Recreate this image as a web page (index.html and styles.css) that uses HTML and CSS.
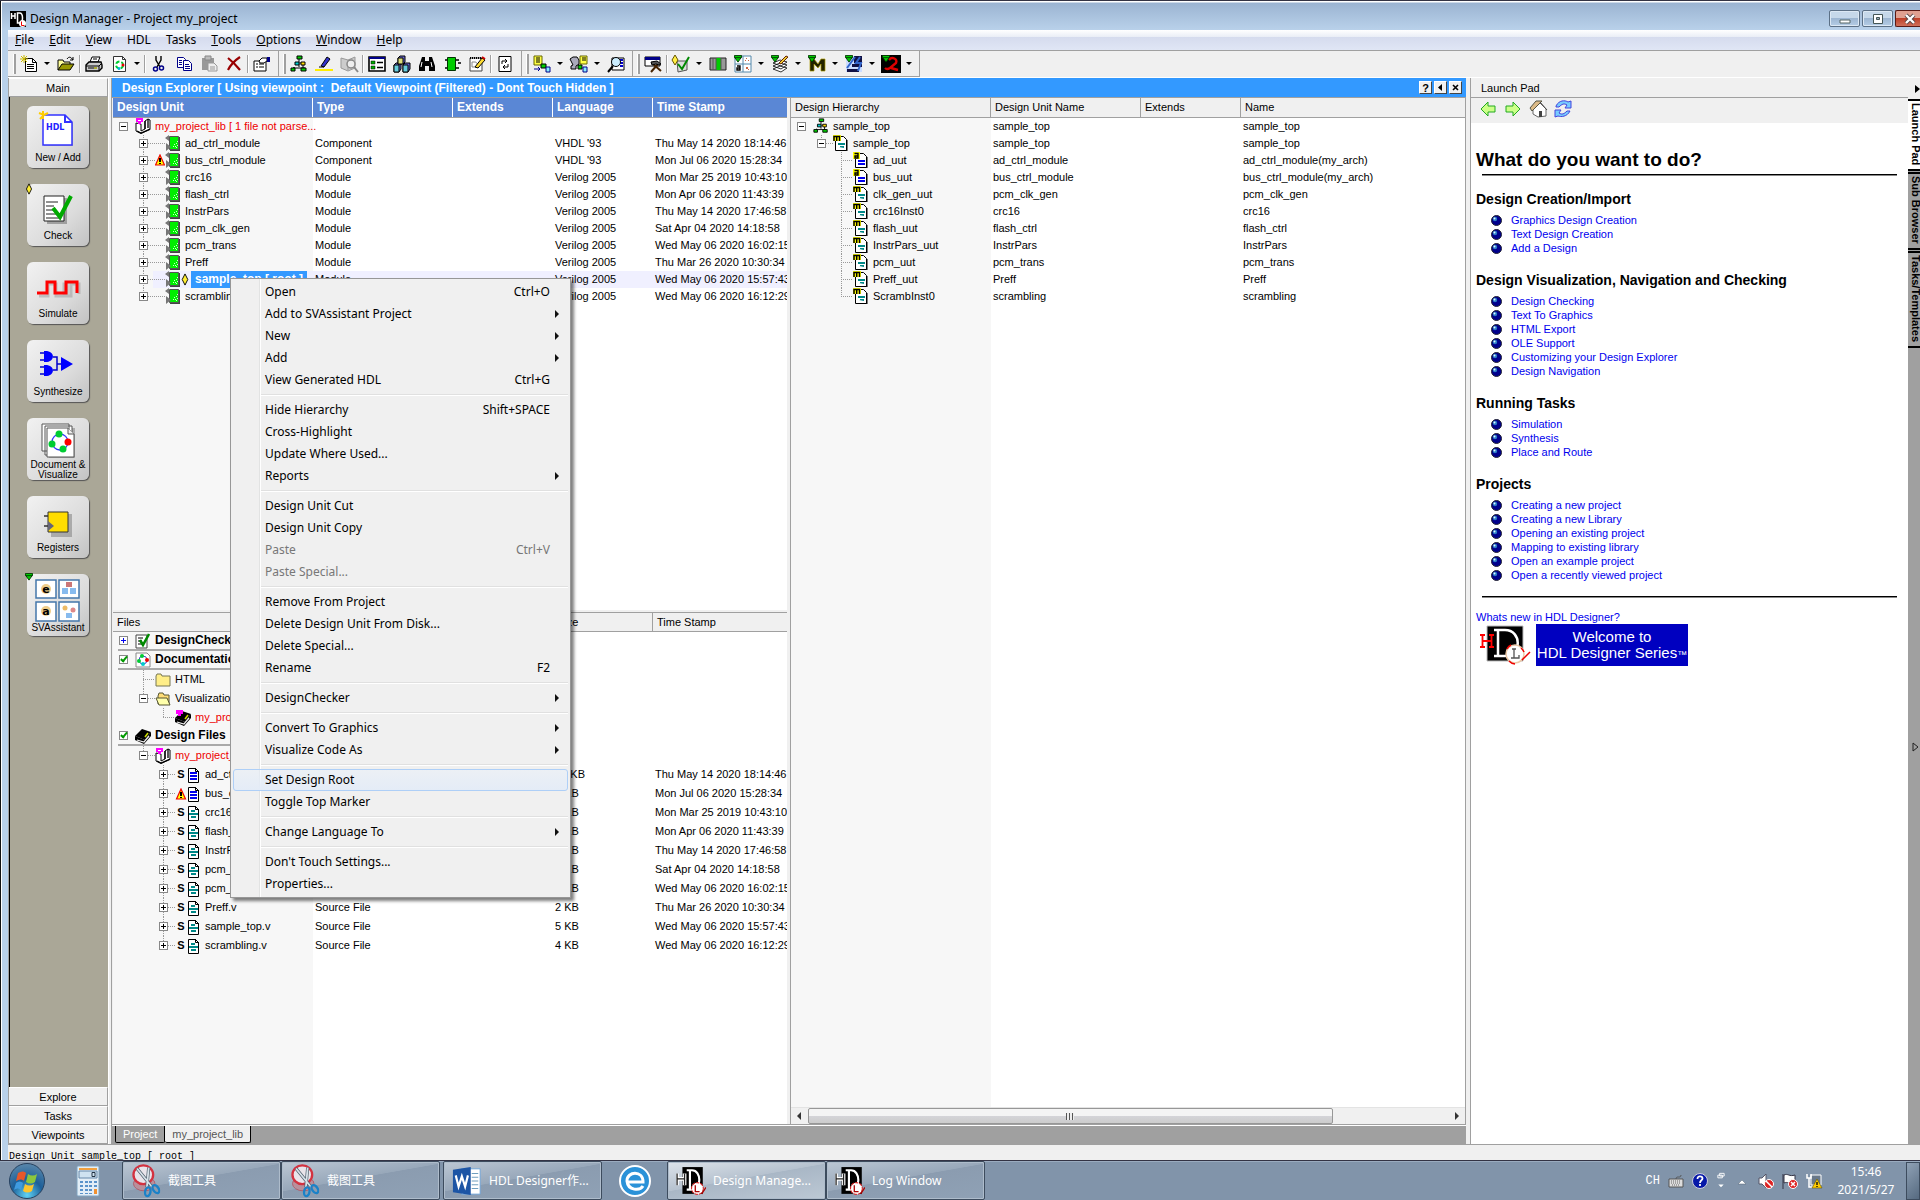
FILE: index.html
```html
<!DOCTYPE html>
<html lang="en">
<head>
<meta charset="utf-8">
<title>Design Manager - Project my_project</title>
<link rel="stylesheet" href="styles.css">
</head>
<body>
<svg class="sprite" aria-hidden="true">
  <symbol id="lib" viewBox="0 0 16 16"><path d="M1 5v8l5 2.500 9-4V2l-2-1-3 2v8l-4 2V6z" fill="#fff" stroke="#000"/><path d="M10 3v8M13 1v9M2 13l4 2 9-4" stroke="#000" stroke-width="1.300" fill="none"/><path d="M1 0h7v4H6v2H3V4H1z" fill="#f0f"/><path d="M3 2h3v1H3z" fill="#fff"/></symbol>
  <symbol id="unit" viewBox="0 0 16 16"><path d="M6 2h9v14H5z" fill="#444"/><path d="M4.500 1.500h9v13h-9z" fill="#0e0" stroke="#555"/><path d="M9 9h1v1H9zM11 8h1v1h-1zM8 11h1v1H8zM10 11h1v1h-1zM12 10h1v1h-1zM11 12h1v1h-1zM12 6h1v1h-1z" fill="#cfc"/><path d="M0 3l4-3v6zM1 8l5 4-5 4z" fill="#777"/></symbol>
  <symbol id="warn" viewBox="0 0 10 12"><path d="M5 1l4.500 10H.5z" fill="#ff0" stroke="#e00" stroke-width="1.200"/><path d="M4 4h2v4H4zM4 9h2v1H4z" fill="#000"/></symbol>
  <symbol id="gem" viewBox="0 0 8 14"><path d="M4 1l3 6-3 6-3-6z" fill="#fe3" stroke="#000"/></symbol>
  <symbol id="hier" viewBox="0 0 18 18"><path d="M9 4v3M9 9v3M5 8h8M4 12v3M13 10v5M3 13h12" stroke="#000" fill="none"/><path d="M7 1h5v3H7z" fill="#0c0" stroke="#000"/><path d="M5 7h4v3H5z" fill="#0cc" stroke="#000"/><path d="M11 7h4v3h-4z" fill="#fd0" stroke="#000"/><path d="M1 13h4v3H1z" fill="#0c0" stroke="#000"/><path d="M11 13h5v3h-5z" fill="#0c0" stroke="#000"/></symbol>
  <symbol id="mdoc" viewBox="0 0 16 16"><path d="M2.500 4v11.500h11V4.500l-3-3H5" fill="#fff" stroke="#000"/><path d="M14 5v11H3" fill="none" stroke="#000"/><path d="M5 8h7v2H5zM7 11h4v1H7zM6 13h5v-1" fill="#088"/><path d="M0 0h8v6H0z" fill="#ff0"/><path d="M1 6V1.500h5.500V6M3.700 2v4" stroke="#000" fill="none" stroke-width="1.500"/></symbol>
  <symbol id="adoc" viewBox="0 0 16 16"><path d="M2.500 4v11.500h11V4.500l-3-3H5" fill="#fff" stroke="#000"/><path d="M14 5v11H3" fill="none" stroke="#000"/><path d="M5 8h7v2H5zM5 11h7v2H5z" fill="#00e"/><path d="M0 0h7v7H0z" fill="#ff0"/><path d="M1.500 1.500H5V6H2V4h3" stroke="#000" fill="none" stroke-width="1.400"/></symbol>
  <symbol id="vhd" viewBox="0 0 14 16"><path d="M1.500 1.500h7l3 3v11h-10z" fill="#fff" stroke="#000"/><path d="M8.500 1v3.500H12" fill="none" stroke="#000"/><path d="M3 5h7v2H3zM3 8h7v2H3zM3 11h7v2H3z" fill="#00e"/></symbol>
  <symbol id="ver" viewBox="0 0 14 16"><path d="M1.500 1.500h7l3 3v11h-10z" fill="#fff" stroke="#000"/><path d="M8.500 1v3.500H12" fill="none" stroke="#000"/><path d="M4 5h4v2H4zM2 8h9v2H2zM4 11h5v2H4z" fill="#088"/></symbol>
  <symbol id="folder" viewBox="0 0 16 14"><path d="M1 3l1-2h4l1 2h8v10H1z" fill="#fe8" stroke="#775"/></symbol>
  <symbol id="folderopen" viewBox="0 0 16 14"><path d="M3 4l1-3h4l1 2h5v9H3z" fill="#fd7" stroke="#553"/><path d="M1 6h11l3 7H4z" fill="#ffa" stroke="#553"/></symbol>
  <symbol id="book" viewBox="0 0 16 16"><path d="M0 8l7-7 9 3-6 8z" fill="#000"/><path d="M0 8v4l9 4 7-8V4l-6 8z" fill="#000"/><path d="M2 12l7 2 5-6" stroke="#eee" fill="none" stroke-width="1.200"/><path d="M10 9l3-4" stroke="#cd0" stroke-width="1.500"/></symbol>
  <symbol id="chk" viewBox="0 0 16 16"><path d="M1 2h11v13H1z" fill="#fff" stroke="#444"/><path d="M3 5h5M3 8h4M3 11h5" stroke="#000"/><path d="M5 7l3 5L14 1" stroke="#080" stroke-width="2.600" fill="none"/></symbol>
  <symbol id="viz" viewBox="0 0 16 16"><path d="M1 1h11l3 3v11H1z" fill="#fff" stroke="#888"/><circle cx="8" cy="8" r="4" fill="none" stroke="#44c"/><circle cx="7" cy="4" r="2" fill="#0c3"/><circle cx="4" cy="9" r="2" fill="#0c3"/><circle cx="8" cy="12" r="2" fill="#0cc"/><circle cx="12" cy="8" r="2" fill="#e00"/></symbol>
  <symbol id="vizdoc" viewBox="0 0 18 18"><path d="M3.500 1.500h9l3 3v12h-12z" fill="#fff" stroke="#333"/><path d="M12.500 1.500v3h3" fill="none" stroke="#333"/><circle cx="9.500" cy="10" r="3.500" fill="none" stroke="#0c3" stroke-width="2" stroke-dasharray="4 2"/><circle cx="13" cy="10" r="1.500" fill="#e00"/><circle cx="9" cy="13.500" r="1.500" fill="#0bd"/></symbol>
  <symbol id="hdl" viewBox="0 0 28 28"><path d="M6 1h19v25H6z" fill="#000"/><path d="M10 4h5c9 0 9 18 0 18h-5M13 4v18" fill="none" stroke="#fff" stroke-width="2"/><path d="M1 7v11M8 7v11M1 12h7" stroke="#fff" stroke-width="3.400"/><path d="M1 7v11M8 7v11M1 12h7" stroke="#222" stroke-width="1.200"/><circle cx="20" cy="21" r="5.500" fill="#fff" stroke="#d22" stroke-dasharray="3 1"/><path d="M18 18v6h4M24 26l4-6" fill="none" stroke="#a00" stroke-width="1.200"/></symbol>
  <symbol id="snip" viewBox="0 0 32 38"><ellipse cx="14" cy="22" rx="12" ry="8" fill="#b8909c" stroke="#b05a68"/><ellipse cx="13" cy="12" rx="11" ry="10.500" fill="#e9e4ea" stroke="#d33240" stroke-width="2.600"/><path d="M6 5l17 21M19 4l-2 22" stroke="#50606e" stroke-width="3.500"/><path d="M6 5l17 21M19 4l-2 22" stroke="#d7e1e8" stroke-width="2"/><ellipse cx="18" cy="31" rx="3" ry="5" fill="none" stroke="#1b82c8" stroke-width="2.600" transform="rotate(10 18 31)"/><ellipse cx="27" cy="28" rx="3" ry="5" fill="none" stroke="#1b82c8" stroke-width="2.600" transform="rotate(-35 27 28)"/></symbol>
  <symbol id="ball" viewBox="0 0 11 11"><circle cx="5.500" cy="5.500" r="5" fill="#00008c" stroke="#223"/><circle cx="4" cy="4" r="2.200" fill="#2c7ec8"/><circle cx="3.500" cy="3.500" r="1" fill="#e5f6ff"/></symbol>
  <symbol id="pin" viewBox="0 0 9 9"><path d="M.5.500h8V3H8L4.500 8 1 3H.5z" fill="#0c0" stroke="#030"/><path d="M1 3h7" stroke="#030"/></symbol>
</svg>

<div class="window">
  <header class="titlebar">
    <svg class="app-icon" viewBox="0 0 16 16"><path d="M0 0h16v16H0z" fill="#000"/><path d="M1.500 2v6M5 2v6M1.500 5H5M7.500 2v10h2c4 0 4-10 0-10z" fill="none" stroke="#fff" stroke-width="1.500"/><circle cx="12.500" cy="12.500" r="3.500" fill="#fff"/><path d="M11.500 10.500v4h3" fill="none" stroke="#e00"/></svg>
    <span class="title-text">Design Manager - Project my_project</span>
    <div class="win-buttons">
      <button class="win-btn" aria-label="Minimize"><svg viewBox="0 0 12 12"><path d="M1 7h10v3H1z" fill="#fff" stroke="#566"/></svg></button>
      <button class="win-btn" aria-label="Maximize"><svg viewBox="0 0 12 12"><path d="M1.500 1.500h9v9h-9z" fill="#fff" stroke="#455"/><path d="M4.500 4.500h3v2h-3z" fill="#9ab" stroke="#455"/></svg></button>
      <button class="win-btn close" aria-label="Close"><svg viewBox="0 0 12 12"><path d="M2 2l8 8M10 2l-8 8" stroke="#544" stroke-width="4"/><path d="M2 2l8 8M10 2l-8 8" stroke="#fff" stroke-width="2.400"/></svg></button>
    </div>
  </header>
  <nav class="menubar">
    <button><u>F</u>ile</button><button><u>E</u>dit</button><button><u>V</u>iew</button><button>HDL</button><button>Tasks</button><button><u>T</u>ools</button><button><u>O</u>ptions</button><button><u>W</u>indow</button><button><u>H</u>elp</button>
  </nav>
  <div class="toolbar">
    <div class="tool-group">
      <button class="tool" aria-label="New"><svg viewBox="0 0 18 18"><path d="M5.500 3.500h7l4 4v9h-11z" fill="#fff" stroke="#000"/><path d="M12.500 3.500v4h4M7 9.500h7M7 11.500h7M7 13.500h7" fill="none" stroke="#000"/><path d="M4 0v8M0 4h8M1 1l6 6M7 1L1 7" stroke="#cb0"/></svg></button><button class="drop" aria-label="New options"></button>
      <button class="tool" aria-label="Open"><svg viewBox="0 0 18 18"><path d="M1 15V5h5l1 2h6v2" fill="#ff9" stroke="#000"/><path d="M1 15l4-6h12l-4 6z" fill="#990" stroke="#000"/><path d="M10 4c2-3 4-2 6 1m0-3v3h-3" fill="none" stroke="#000"/></svg></button>
      <span class="sep"></span>
      <button class="tool" aria-label="Print"><svg viewBox="0 0 18 18"><path d="M5 7l2-5h8l-2 5z" fill="#fff" stroke="#000"/><path d="M1 10l3-3h12l1 3v3l-3 3H1z" fill="#ccc" stroke="#000" stroke-width="1.400"/><path d="M1 11h13l3-3M14 11v5M8 4h4M3 13h9" stroke="#000" fill="none"/><path d="M9 13h3" stroke="#ee0"/></svg></button>
      <button class="tool" aria-label="Visualize"><svg viewBox="0 0 18 18"><use href="#vizdoc"/></svg></button><button class="drop" aria-label="Visualize options"></button>
      <span class="sep"></span>
      <button class="tool" aria-label="Cut"><svg viewBox="0 0 18 18"><path d="M6 1v4l4 7M11 1v4l-4 7" fill="none" stroke="#000" stroke-width="1.400"/><circle cx="5.500" cy="14" r="2" fill="none" stroke="#008" stroke-width="1.500"/><circle cx="11.500" cy="13" r="2" fill="none" stroke="#008" stroke-width="1.500"/></svg></button>
      <button class="tool" aria-label="Copy"><svg viewBox="0 0 18 18"><path d="M2.500 2.500h6l2 2v8h-8z" fill="#fff" stroke="#008"/><path d="M8.500 5.500h5l3 3v7h-8z" fill="#fff" stroke="#008"/><path d="M4 5.500h3M4 7.500h3M4 9.500h3M10 9.500h4M10 11.500h5M10 13.500h5" stroke="#008"/></svg></button>
      <button class="tool" aria-label="Paste"><svg viewBox="0 0 18 18"><path d="M2 3h12v12H2z" fill="#999"/><path d="M5 1h6v4H5z" fill="#bbb" stroke="#888"/><path d="M8 8h6l3 3v5H8z" fill="#eee" stroke="#999"/><path d="M10 12h5M10 14h5" stroke="#999"/></svg></button>
      <button class="tool" aria-label="Delete"><svg viewBox="0 0 18 18"><path d="M3 3c5 4 8 7 12 12M15 2C9 6 5 11 3 15" fill="none" stroke="#900" stroke-width="2.200"/></svg></button>
      <span class="sep"></span>
      <button class="tool" aria-label="Properties"><svg viewBox="0 0 18 18"><path d="M1 6h12v10H1z" fill="#fff" stroke="#000"/><path d="M3 9h2M6 9h5M3 12h2M6 12h5" stroke="#000"/><path d="M6 6l3-3h5v3l-3 2H7z" fill="#fff" stroke="#000"/><path d="M14 2h3v5h-3z" fill="#008"/></svg></button>
    </div>
    <div class="tool-group">
      <button class="tool" aria-label="Hierarchy"><svg viewBox="0 0 18 18"><use href="#hier"/></svg></button>
      <button class="tool" aria-label="Highlight"><svg viewBox="0 0 18 18"><path d="M6 11l6-9 3 2-6 8z" fill="#33c" stroke="#000"/><path d="M4 12h5" stroke="#000"/><path d="M0 14h18v2H0z" fill="#fe0"/></svg></button>
      <button class="tool" aria-label="Browse"><svg viewBox="0 0 18 18"><path d="M1 3l7 2 7-3v11l-7 3-7-3z" fill="#ccc" stroke="#999"/><path d="M8 5v10" stroke="#999"/><circle cx="11" cy="9" r="4" fill="#eee" stroke="#888" stroke-width="1.500"/><path d="M14 12l4 5" stroke="#888" stroke-width="2"/></svg></button>
      <span class="sep"></span>
      <button class="tool" aria-label="Viewpoint"><svg viewBox="0 0 18 18"><path d="M1 2h16v14H1z" fill="#fff" stroke="#000" stroke-width="1.600"/><path d="M1 2h16v2H1z" fill="#008"/><path d="M3 6h4v3H3zM3 11h4v3H3z" fill="#0a0" stroke="#000" stroke-width=".5"/><path d="M9 7.500h6M9 12.500h6" stroke="#000" stroke-width="1.500"/></svg></button>
      <button class="tool" aria-label="Components"><svg viewBox="0 0 18 18"><path d="M5 3l2-2h5v6l-2 2H5zM1 10l2-2h5v6l-2 3H1zM10 10l2-2h5v6l-2 3h-5z" fill="#66c" stroke="#000"/><path d="M5 3h5v6H5z" fill="#dd7" stroke="#000"/><path d="M1 10h5v7H1zM10 10h5v7h-5z" fill="#6cd" stroke="#000"/></svg></button>
      <button class="tool" aria-label="Find"><svg viewBox="0 0 18 18"><path d="M4 2h3v4h4V2h3l3 9v5h-6v-5H7v5H1v-5z" fill="#000"/><path d="M4 7l-1 5M13 7l1 5" stroke="#fff"/></svg></button>
      <button class="tool" aria-label="Block"><svg viewBox="0 0 18 18"><path d="M2 5h14M2 13h14M15 8h3" stroke="#000" stroke-width="1.500"/><path d="M4.500 2.500h8v13h-8z" fill="#0c0" stroke="#030"/></svg></button>
      <button class="tool" aria-label="Edit note"><svg viewBox="0 0 18 18"><path d="M2 3h12v13H2z" fill="#fff" stroke="#444"/><path d="M2 3h12" stroke="#000" stroke-dasharray="1 1" stroke-width="2"/><path d="M4 7h3c3 0 3 5 0 5H4z" fill="none" stroke="#888"/><path d="M7 12l7-9 3 2-7 8z" fill="#fd3" stroke="#000"/><path d="M14 2l3 2" stroke="#c00" stroke-width="2"/></svg></button>
      <span class="sep"></span>
      <button class="tool" aria-label="Refresh"><svg viewBox="0 0 18 18"><path d="M3 1.500h12v15H3z" fill="#fff" stroke="#000"/><path d="M6 9V6h5M9 4l2 2-2 2M12 9v3H7m2-2l-2 2 2 2" fill="none" stroke="#000"/></svg></button>
    </div>
    <div class="tool-group">
      <button class="tool" aria-label="Generate"><svg viewBox="0 0 18 18"><path d="M1 1h8v9H1z" fill="#ff4" stroke="#660"/><path d="M3 3h4M3 5h4M3 7h4" stroke="#000"/><path d="M8 9h5v4H8z" fill="#0c0" stroke="#000"/><path d="M13 12h4v5h-4z" fill="#8ef" stroke="#008"/><path d="M1 14h6m-2-2l2 2-2 2" fill="none" stroke="#008"/></svg></button><button class="drop" aria-label="Generate options"></button>
      <button class="tool" aria-label="Run through"><svg viewBox="0 0 18 18"><path d="M0 4l3-2h4l2 3v4l-3 2v3H1v-3l2-1z" fill="#aab" stroke="#000"/><path d="M10 1h7v8h-7z" fill="#ff4" stroke="#660"/><path d="M12 3h4M12 5h4" stroke="#000"/><path d="M8 10h4v4H8z" fill="#0c0" stroke="#000"/><path d="M13 12h4v5h-4z" fill="#8ef" stroke="#008"/></svg></button><button class="drop" aria-label="Run options"></button>
      <button class="tool" aria-label="Inspect"><svg viewBox="0 0 18 18"><path d="M5 3h12v12H5z" fill="#fff" stroke="#000"/><path d="M13 5h3M13 8h3M13 11h3" stroke="#00c" stroke-width="2"/><circle cx="9" cy="7" r="4.500" fill="#cef" stroke="#000"/><path d="M6 11l-5 6" stroke="#000" stroke-width="2"/></svg></button>
    </div>
    <div class="tool-group">
      <button class="tool" aria-label="Task settings"><svg viewBox="0 0 18 18"><path d="M1 2h15v9H1z" fill="#fff" stroke="#000"/><path d="M1 2h15v3H1z" fill="#008"/><path d="M9 9l8 7M14 9l-7 8" stroke="#420" stroke-width="2"/><path d="M7 7l6-1 4 3-2 1-3-1-4 1z" fill="#555" stroke="#000"/></svg></button>
      <span class="sep"></span>
      <button class="tool" aria-label="Check design"><svg viewBox="0 0 18 18"><path d="M5 6h10v9l-9 2z" fill="#ddd" stroke="#555"/><path d="M3 0l3 5-3 5-3-5z" fill="#fe4" stroke="#650"/><path d="M6 9l4 5 7-12" fill="none" stroke="#080" stroke-width="2"/></svg></button><button class="drop" aria-label="Check options"></button>
      <button class="tool" aria-label="Registers"><svg viewBox="0 0 18 18"><path d="M1 3h16v12H1z" fill="#999" stroke="#222"/><path d="M7 3h5v12H7z" fill="#0c0"/><path d="M4 3v12M7 3v12M12 3v12" stroke="#555"/></svg></button>
      <button class="tool" aria-label="SVAssistant"><svg viewBox="0 0 18 18"><path d="M1 1h16v16H1zM9 1v16M1 9h16" fill="#fff" stroke="#58a"/><path d="M3 11h3v4H3v-2h3" fill="none" stroke="#000" stroke-width="1.400"/><path d="M12 3h1v1h-1zM14 5h1v1h-1zM11 5h1v1h-1zM12 12h2v2h-2zM14 14h1v1h-1z" fill="#c64"/><use href="#pin" width="8" height="8"/></svg></button><button class="drop" aria-label="SVAssistant options"></button>
      <button class="tool" aria-label="Layers"><svg viewBox="0 0 18 18"><path d="M2 14l7-3 7 2-6 4zM2 11l7-3 7 2-6 4zM2 8l7-3 7 2-6 4z" fill="#fff" stroke="#000" stroke-width=".8"/><path d="M8 8l7-7 2 1-7 7z" fill="#ec3" stroke="#620"/><use href="#pin" width="8" height="8"/></svg></button><button class="drop" aria-label="Layer options"></button>
      <button class="tool" aria-label="ModelSim"><svg viewBox="0 0 18 18"><path d="M2 4h4l4 5 3-5h4v12h-4V9l-3 4-4-4v7H2z" fill="#220" stroke="#a90" stroke-width=".7"/><use href="#pin" width="8" height="8"/></svg></button><button class="drop" aria-label="ModelSim options"></button>
      <button class="tool" aria-label="Wave simulator"><svg viewBox="0 0 18 18"><path d="M1 1h16v16H1z" fill="#cdf"/><path d="M9 1h8v7H9zM7 9h10v3H7zM2 14h12v3H2z" fill="#114"/><path d="M2 13L10 2M15 2l-4 6h5l-3 8" stroke="#36c" stroke-width="2" fill="none"/><use href="#pin" width="8" height="8"/></svg></button><button class="drop" aria-label="Wave options"></button>
      <button class="tool" aria-label="Synthesis"><svg viewBox="0 0 18 18"><path d="M-1 0h20v18H-1z" fill="#000"/><path d="M7 5c3-4 9-1 7 3l-6 5c-3 2-5 0-5 0m6 0l7 2" fill="none" stroke="#d00" stroke-width="2.400"/><use href="#pin" width="8" height="8"/></svg></button><button class="drop" aria-label="Synthesis options"></button>
    </div>
  </div>

  <main class="workspace">
    <aside class="sidebar">
      <button class="side-tab">Main</button>
      <div class="launchers">
        <button class="launcher"><svg viewBox="0 0 62 42"><path d="M17 10h22l7 7v23H17z" fill="#888" opacity=".5"/><path d="M16 9h22l7 7v23H16z" fill="#fff" stroke="#33f" stroke-width="1.500"/><path d="M38 9v7h7" fill="none" stroke="#33f" stroke-width="2"/><path d="M12 7l5 2 4-2M17 9l-4 4M16 5v8" stroke="#fc0" stroke-width="2" fill="none"/><text x="19" y="24" class="hdl-text">HDL</text></svg><span>New / Add</span></button>
        <button class="launcher"><svg viewBox="0 0 62 42"><path d="M20 14h20v26H20z" fill="#777" opacity=".6"/><path d="M17 12h20v25H17z" fill="#fff" stroke="#222"/><path d="M19 18h12M19 22h8M19 26h9M19 30h12M19 34h13" stroke="#222"/><path d="M26 24l7 9 11-21" fill="none" stroke="#0a0" stroke-width="4"/></svg><span>Check</span><svg class="badge" viewBox="0 0 8 14"><use href="#gem"/></svg></button>
        <button class="launcher"><svg viewBox="0 0 62 42"><path d="M12 34h9V22h8v12h8V22h3v12h4V22h8v10" fill="none" stroke="#888" stroke-width="3" opacity=".4"/><path d="M10 32h10V20h8v12h10V20h4M38 20v12M41 32h-4M38 20h4v12M42 20h8v11" fill="none" stroke="#f00" stroke-width="3" opacity="0"/><path d="M10 31h10V20h8v11h11V20h11v11" fill="none" stroke="#f00" stroke-width="3"/></svg><span>Simulate</span></button>
        <button class="launcher"><svg viewBox="0 0 62 42"><path d="M17 11c12-1 12 12 0 11zM17 25c12-1 12 12 0 11zM34 17l12 7-12 7z" fill="#00f"/><path d="M13 13h4M13 20h4M13 27h4M13 34h4M26 17h4v13h-4M30 24h4" stroke="#00c" stroke-width="1.500" fill="none"/></svg><span>Synthesize</span></button>
        <button class="launcher"><svg viewBox="0 0 62 42"><path d="M18 10h30v30H22z" fill="#777" opacity=".5"/><path d="M15 6h27v27H15zM18 8h27v29H18z" fill="#fff" stroke="#555"/><path d="M20 10h21l6 6v23H20z" fill="#fff" stroke="#555"/><path d="M41 10v6h6" fill="#eee" stroke="#555"/><circle cx="33" cy="24" r="8" fill="none" stroke="#33f" stroke-width="1.300"/><circle cx="32" cy="16" r="3.500" fill="#0c3"/><circle cx="25" cy="26" r="3.500" fill="#0c3"/><circle cx="36" cy="31" r="3.500" fill="#0c3"/><circle cx="41" cy="24" r="3.500" fill="#f00"/></svg><span>Document &amp; Visualize</span></button>
        <button class="launcher"><svg viewBox="0 0 62 42"><path d="M24 18h21v23H24z" fill="#777" opacity=".5"/><path d="M21 16h20v20H21z" fill="#fd0" stroke="#333"/><path d="M17 20h4M17 30h4" stroke="#333" stroke-width="1.500"/><path d="M21 25l6 5-6 5z" fill="#667"/></svg><span>Registers</span></button>
        <button class="launcher tall"><svg viewBox="0 0 62 46"><path d="M9 6h20v18H9zM32 6h20v18H32zM9 28h20v19H9zM32 28h20v19H32z" fill="#fff" stroke="#47a" stroke-width="1.500"/><circle cx="19" cy="15" r="5" fill="#ec8"/><circle cx="19" cy="37" r="5" fill="#ec8"/><path d="M39 8h6v5h-6z" fill="#c77"/><path d="M35 14h6v6h-6zM43 14h6v6h-6zM39 39h6v5h-6z" fill="#8be"/><circle cx="38" cy="34" r="2.500" fill="#eb6"/><circle cx="46" cy="36" r="2.500" fill="#d88"/><text x="19" y="19" class="sv-text">e</text><text x="19" y="41" class="sv-text">a</text></svg><span>SVAssistant</span><svg class="badge" viewBox="0 0 9 9"><use href="#pin"/></svg></button>
      </div>
      <button class="side-tab">Explore</button><button class="side-tab">Tasks</button><button class="side-tab">Viewpoints</button>
    </aside>

    <section class="explorer">
      <div class="panel-title"><h2>Design Explorer [ Using viewpoint :&nbsp; Default Viewpoint (Filtered) - Dont Touch Hidden ]</h2>
        <button class="mini">?</button><button class="mini" aria-label="Dock"><svg viewBox="0 0 9 9"><path d="M6 1v7L2 4.500z"/></svg></button><button class="mini" aria-label="Close panel"><svg viewBox="0 0 9 9"><path d="M2 2l5 5M7 2L2 7" stroke="#000" stroke-width="1.600"/></svg></button>
      </div>
      <div class="panes">
        <div class="pane-left">
          <div class="pane shade">
            <table class="grid active">
              <colgroup><col class="w200"><col class="w140"><col class="w100"><col class="w100"><col></colgroup>
              <thead><tr><th>Design Unit</th><th>Type</th><th>Extends</th><th>Language</th><th>Time Stamp</th></tr></thead>
              <tbody>
                <tr><td><div class="tree l0"><button class="toggle" aria-label="Collapse"></button><svg class="icon"><use href="#lib"/></svg><span class="red">my_project_lib [ 1 file not parse...</span></div></td><td></td><td></td><td></td><td></td></tr>
                <tr><td><div class="tree l1 g30"><button class="toggle plus" aria-label="Expand"></button><i class="dots d17"></i><svg class="icon"><use href="#unit"/></svg><span>ad_ctrl_module</span></div></td><td>Component</td><td></td><td>VHDL '93</td><td>Thu May 14 2020 18:14:46</td></tr>
                <tr><td><div class="tree l1 g30"><button class="toggle plus" aria-label="Expand"></button><i class="dots d7"></i><svg class="warn"><use href="#warn"/></svg><svg class="icon"><use href="#unit"/></svg><span>bus_ctrl_module</span></div></td><td>Component</td><td></td><td>VHDL '93</td><td>Mon Jul 06 2020 15:28:34</td></tr>
                <tr><td><div class="tree l1 g30"><button class="toggle plus" aria-label="Expand"></button><i class="dots d17"></i><svg class="icon"><use href="#unit"/></svg><span>crc16</span></div></td><td>Module</td><td></td><td>Verilog 2005</td><td>Mon Mar 25 2019 10:43:10</td></tr>
                <tr><td><div class="tree l1 g30"><button class="toggle plus" aria-label="Expand"></button><i class="dots d17"></i><svg class="icon"><use href="#unit"/></svg><span>flash_ctrl</span></div></td><td>Module</td><td></td><td>Verilog 2005</td><td>Mon Apr 06 2020 11:43:39</td></tr>
                <tr><td><div class="tree l1 g30"><button class="toggle plus" aria-label="Expand"></button><i class="dots d17"></i><svg class="icon"><use href="#unit"/></svg><span>InstrPars</span></div></td><td>Module</td><td></td><td>Verilog 2005</td><td>Thu May 14 2020 17:46:58</td></tr>
                <tr><td><div class="tree l1 g30"><button class="toggle plus" aria-label="Expand"></button><i class="dots d17"></i><svg class="icon"><use href="#unit"/></svg><span>pcm_clk_gen</span></div></td><td>Module</td><td></td><td>Verilog 2005</td><td>Sat Apr 04 2020 14:18:58</td></tr>
                <tr><td><div class="tree l1 g30"><button class="toggle plus" aria-label="Expand"></button><i class="dots d17"></i><svg class="icon"><use href="#unit"/></svg><span>pcm_trans</span></div></td><td>Module</td><td></td><td>Verilog 2005</td><td>Wed May 06 2020 16:02:15</td></tr>
                <tr><td><div class="tree l1 g30"><button class="toggle plus" aria-label="Expand"></button><i class="dots d17"></i><svg class="icon"><use href="#unit"/></svg><span>Preff</span></div></td><td>Module</td><td></td><td>Verilog 2005</td><td>Thu Mar 26 2020 10:30:34</td></tr>
                <tr class="current"><td><div class="tree l1 g30"><button class="toggle plus" aria-label="Expand"></button><i class="dots d17"></i><svg class="icon"><use href="#unit"/></svg><svg class="gem"><use href="#gem"/></svg><span class="picked">sample_top [ root ]</span></div></td><td>Module</td><td></td><td>Verilog 2005</td><td>Wed May 06 2020 15:57:43</td></tr>
                <tr><td><div class="tree l1 g30 last"><button class="toggle plus" aria-label="Expand"></button><i class="dots d17"></i><svg class="icon"><use href="#unit"/></svg><span>scrambling</span></div></td><td>Module</td><td></td><td>Verilog 2005</td><td>Wed May 06 2020 16:12:29</td></tr>
              </tbody>
            </table>
          </div>
          <div class="pane shade files">
            <table class="grid">
              <colgroup><col class="w200"><col class="w140"><col class="w100"><col class="w100"><col></colgroup>
              <thead><tr><th>Files</th><th>Type</th><th></th><th>Size</th><th>Time Stamp</th></tr></thead>
              <tbody>
                <tr><td><div class="tree section"><button class="toggle plus blue" aria-label="Expand"></button><svg class="icon"><use href="#chk"/></svg><span>DesignChecker</span></div></td><td></td><td></td><td></td><td></td></tr>
                <tr><td><div class="tree section"><input type="checkbox" class="tick" checked aria-label="Documentation and Visualization"><svg class="icon"><use href="#viz"/></svg><span>Documentation</span></div></td><td></td><td></td><td></td><td></td></tr>
                <tr><td><div class="tree leaf30 g30"><i class="dots d12"></i><svg class="icon"><use href="#folder"/></svg><span>HTML</span></div></td><td></td><td></td><td></td><td></td></tr>
                <tr><td><div class="tree l1 g30 last"><button class="toggle" aria-label="Collapse"></button><i class="dots d7"></i><svg class="icon"><use href="#folderopen"/></svg><span>Visualization</span></div></td><td></td><td></td><td></td><td></td></tr>
                <tr><td><div class="tree leaf50 g50 last"><i class="dots d12"></i><svg class="icon"><use href="#book"/><path d="M1 0h7v4H6v2H3V4H1z" fill="#f0f"/></svg><span class="red">my_project_lib</span></div></td><td></td><td></td><td></td><td></td></tr>
                <tr><td><div class="tree section"><input type="checkbox" class="tick" checked aria-label="Design Files"><svg class="icon"><use href="#book"/></svg><span>Design Files</span></div></td><td></td><td></td><td></td><td></td></tr>
                <tr><td><div class="tree l1 g30 last"><button class="toggle" aria-label="Collapse"></button><i class="dots d7"></i><svg class="icon"><use href="#lib"/></svg><span class="red">my_project_lib</span></div></td><td></td><td></td><td></td><td></td></tr>
                <tr><td><div class="tree l2 g50"><button class="toggle plus" aria-label="Expand"></button><i class="dots d7"></i><b class="s">S</b><svg class="icon narrow"><use href="#vhd"/></svg><span>ad_ctrl_module.vhd</span></div></td><td>Source File</td><td></td><td>12 KB</td><td>Thu May 14 2020 18:14:46</td></tr>
                <tr><td><div class="tree l2 g50"><button class="toggle plus" aria-label="Expand"></button><i class="dots d7"></i><svg class="warn wide"><use href="#warn"/></svg><svg class="icon narrow"><use href="#vhd"/></svg><span>bus_ctrl_module.vhd</span></div></td><td>Source File</td><td></td><td>4 KB</td><td>Mon Jul 06 2020 15:28:34</td></tr>
                <tr><td><div class="tree l2 g50"><button class="toggle plus" aria-label="Expand"></button><i class="dots d7"></i><b class="s">S</b><svg class="icon narrow"><use href="#ver"/></svg><span>crc16.v</span></div></td><td>Source File</td><td></td><td>2 KB</td><td>Mon Mar 25 2019 10:43:10</td></tr>
                <tr><td><div class="tree l2 g50"><button class="toggle plus" aria-label="Expand"></button><i class="dots d7"></i><b class="s">S</b><svg class="icon narrow"><use href="#ver"/></svg><span>flash_ctrl.v</span></div></td><td>Source File</td><td></td><td>4 KB</td><td>Mon Apr 06 2020 11:43:39</td></tr>
                <tr><td><div class="tree l2 g50"><button class="toggle plus" aria-label="Expand"></button><i class="dots d7"></i><b class="s">S</b><svg class="icon narrow"><use href="#ver"/></svg><span>InstrPars.v</span></div></td><td>Source File</td><td></td><td>4 KB</td><td>Thu May 14 2020 17:46:58</td></tr>
                <tr><td><div class="tree l2 g50"><button class="toggle plus" aria-label="Expand"></button><i class="dots d7"></i><b class="s">S</b><svg class="icon narrow"><use href="#ver"/></svg><span>pcm_clk_gen.v</span></div></td><td>Source File</td><td></td><td>2 KB</td><td>Sat Apr 04 2020 14:18:58</td></tr>
                <tr><td><div class="tree l2 g50"><button class="toggle plus" aria-label="Expand"></button><i class="dots d7"></i><b class="s">S</b><svg class="icon narrow"><use href="#ver"/></svg><span>pcm_trans.v</span></div></td><td>Source File</td><td></td><td>4 KB</td><td>Wed May 06 2020 16:02:15</td></tr>
                <tr><td><div class="tree l2 g50"><button class="toggle plus" aria-label="Expand"></button><i class="dots d7"></i><b class="s">S</b><svg class="icon narrow"><use href="#ver"/></svg><span>Preff.v</span></div></td><td>Source File</td><td></td><td>2 KB</td><td>Thu Mar 26 2020 10:30:34</td></tr>
                <tr><td><div class="tree l2 g50"><button class="toggle plus" aria-label="Expand"></button><i class="dots d7"></i><b class="s">S</b><svg class="icon narrow"><use href="#ver"/></svg><span>sample_top.v</span></div></td><td>Source File</td><td></td><td>5 KB</td><td>Wed May 06 2020 15:57:43</td></tr>
                <tr><td><div class="tree l2 g50 last"><button class="toggle plus" aria-label="Expand"></button><i class="dots d7"></i><b class="s">S</b><svg class="icon narrow"><use href="#ver"/></svg><span>scrambling.v</span></div></td><td>Source File</td><td></td><td>4 KB</td><td>Wed May 06 2020 16:12:29</td></tr>
              </tbody>
            </table>
          </div>
        </div>
        <div class="pane-right">
          <div class="pane shade">
            <table class="grid">
              <colgroup><col class="w200"><col class="w150"><col class="w100"><col></colgroup>
              <thead><tr><th>Design Hierarchy</th><th>Design Unit Name</th><th>Extends</th><th>Name</th></tr></thead>
              <tbody>
                <tr><td><div class="tree l0"><button class="toggle" aria-label="Collapse"></button><svg class="icon"><use href="#hier"/></svg><span>sample_top</span></div></td><td>sample_top</td><td></td><td>sample_top</td></tr>
                <tr><td><div class="tree l1 g30 last"><button class="toggle" aria-label="Collapse"></button><i class="dots d7"></i><svg class="icon"><use href="#mdoc"/></svg><span>sample_top</span></div></td><td>sample_top</td><td></td><td>sample_top</td></tr>
                <tr><td><div class="tree leaf50 g50"><i class="dots d12"></i><svg class="icon"><use href="#adoc"/></svg><span>ad_uut</span></div></td><td>ad_ctrl_module</td><td></td><td>ad_ctrl_module(my_arch)</td></tr>
                <tr><td><div class="tree leaf50 g50"><i class="dots d12"></i><svg class="icon"><use href="#adoc"/></svg><span>bus_uut</span></div></td><td>bus_ctrl_module</td><td></td><td>bus_ctrl_module(my_arch)</td></tr>
                <tr><td><div class="tree leaf50 g50"><i class="dots d12"></i><svg class="icon"><use href="#mdoc"/></svg><span>clk_gen_uut</span></div></td><td>pcm_clk_gen</td><td></td><td>pcm_clk_gen</td></tr>
                <tr><td><div class="tree leaf50 g50"><i class="dots d12"></i><svg class="icon"><use href="#mdoc"/></svg><span>crc16Inst0</span></div></td><td>crc16</td><td></td><td>crc16</td></tr>
                <tr><td><div class="tree leaf50 g50"><i class="dots d12"></i><svg class="icon"><use href="#mdoc"/></svg><span>flash_uut</span></div></td><td>flash_ctrl</td><td></td><td>flash_ctrl</td></tr>
                <tr><td><div class="tree leaf50 g50"><i class="dots d12"></i><svg class="icon"><use href="#mdoc"/></svg><span>InstrPars_uut</span></div></td><td>InstrPars</td><td></td><td>InstrPars</td></tr>
                <tr><td><div class="tree leaf50 g50"><i class="dots d12"></i><svg class="icon"><use href="#mdoc"/></svg><span>pcm_uut</span></div></td><td>pcm_trans</td><td></td><td>pcm_trans</td></tr>
                <tr><td><div class="tree leaf50 g50"><i class="dots d12"></i><svg class="icon"><use href="#mdoc"/></svg><span>Preff_uut</span></div></td><td>Preff</td><td></td><td>Preff</td></tr>
                <tr><td><div class="tree leaf50 g50 last"><i class="dots d12"></i><svg class="icon"><use href="#mdoc"/></svg><span>ScrambInst0</span></div></td><td>scrambling</td><td></td><td>scrambling</td></tr>
              </tbody>
            </table>
          </div>
          <div class="hscroll">
            <button aria-label="Scroll left"><svg viewBox="0 0 7 8"><path d="M5 0v8L1 4z"/></svg></button>
            <div class="track"><div class="thumb"></div></div>
            <button aria-label="Scroll right"><svg viewBox="0 0 7 8"><path d="M2 0v8l4-4z"/></svg></button>
          </div>
        </div>
      </div>
      <div class="doc-tabs"><button class="doc-tab">Project</button><button class="doc-tab on">my_project_lib</button></div>
    </section>

    <section class="launchpad">
      <div class="pad-main">
        <div class="pad-title">Launch Pad</div>
        <div class="pad-tools">
          <button aria-label="Back"><svg viewBox="0 0 18 18"><path d="M2 9l7-7v4h7v6H9v4z" fill="#cf8" stroke="#2a2"/></svg></button>
          <button aria-label="Forward"><svg viewBox="0 0 18 18"><path d="M16 9L9 2v4H2v6h7v4z" fill="#cf8" stroke="#2a2"/></svg></button>
          <button aria-label="Home"><svg viewBox="0 0 18 18"><path d="M4 8l7-5 6 6v7l-8 1-5-3z" fill="#fff" stroke="#666"/><path d="M1 8l6-7h6l-7 7-3 3z" fill="#db8" stroke="#554"/><path d="M11 2l7 8" stroke="#444"/><path d="M10 11h3v6h-3z" fill="#444"/></svg></button>
          <button aria-label="Reload"><svg viewBox="0 0 18 18"><path d="M2 6c3-6 9-6 12-4l3-1v7h-6l2-3c-3-2-5-1-8 2H2zM16 11c-3 6-9 6-12 5l-3 1v-7h6l-2 3c3 2 5 1 8-2z" fill="#7cf" stroke="#44d"/></svg></button>
        </div>
        <div class="pad-body">
          <h1>What do you want to do?</h1>
          <hr>
          <h3>Design Creation/Import</h3>
          <ul><li><svg><use href="#ball"/></svg><a href="#">Graphics Design Creation</a></li><li><svg><use href="#ball"/></svg><a href="#">Text Design Creation</a></li><li><svg><use href="#ball"/></svg><a href="#">Add a Design</a></li></ul>
          <h3>Design Visualization, Navigation and Checking</h3>
          <ul><li><svg><use href="#ball"/></svg><a href="#">Design Checking</a></li><li><svg><use href="#ball"/></svg><a href="#">Text To Graphics</a></li><li><svg><use href="#ball"/></svg><a href="#">HTML Export</a></li><li><svg><use href="#ball"/></svg><a href="#">OLE Support</a></li><li><svg><use href="#ball"/></svg><a href="#">Customizing your Design Explorer</a></li><li><svg><use href="#ball"/></svg><a href="#">Design Navigation</a></li></ul>
          <h3>Running Tasks</h3>
          <ul><li><svg><use href="#ball"/></svg><a href="#">Simulation</a></li><li><svg><use href="#ball"/></svg><a href="#">Synthesis</a></li><li><svg><use href="#ball"/></svg><a href="#">Place and Route</a></li></ul>
          <h3>Projects</h3>
          <ul><li><svg><use href="#ball"/></svg><a href="#">Creating a new project</a></li><li><svg><use href="#ball"/></svg><a href="#">Creating a new Library</a></li><li><svg><use href="#ball"/></svg><a href="#">Opening an existing project</a></li><li><svg><use href="#ball"/></svg><a href="#">Mapping to existing library</a></li><li><svg><use href="#ball"/></svg><a href="#">Open an example project</a></li><li><svg><use href="#ball"/></svg><a href="#">Open a recently viewed project</a></li></ul>
          <hr class="end">
          <a class="news" href="#">Whats new in HDL Designer?</a>
          <div class="welcome">
            <svg viewBox="0 0 52 40"><path d="M7 2h36v35H7z" fill="#000" stroke="#bbb"/><g fill="none"><path d="M14 6h11c17 0 17 26 0 26H14M18 6v26" stroke="#fff" stroke-width="2.500"/><path d="M0 11h5M9 11h5M0 23h5M9 23h5M2.500 11v12M11.500 11v12M3 17h9" stroke="#f00" stroke-width="1.800"/></g><circle cx="35" cy="30" r="9" fill="#fff" stroke="#ecc9a8" stroke-width="1.500"/><path d="M27 25a9 9 0 0 1 4-4M29 37a9 9 0 0 0 6 3M41 24a9 9 0 0 1 3 4M42 36l8-8" stroke="#e00" stroke-width="1.500" fill="none"/><path d="M32 25h4M34 25v9M31 34h8v-3" fill="none" stroke="#555" stroke-width="1.300"/></svg>
            <div class="banner">Welcome to<br>HDL Designer Series<small>™</small></div>
          </div>
        </div>
      </div>
      <div class="pad-tabs">
        <button class="collapse" aria-label="Collapse"><svg viewBox="0 0 8 10"><path d="M3 1v8l5-4z"/></svg></button>
        <button class="vtab on">Launch Pad</button><button class="vtab">Sub Browser</button><button class="vtab">Tasks/Templates</button>
        <div class="splitter"><svg viewBox="0 0 8 10"><path d="M1 1v8l5-4z" fill="none" stroke="#222"/></svg></div>
      </div>
    </section>
  </main>
  <div class="statusbar">Design Unit sample_top [ root ]</div>

  <ul class="context" role="menu">
    <li><button>Open<kbd>Ctrl+O</kbd></button></li>
    <li><button class="sub">Add to SVAssistant Project</button></li>
    <li><button class="sub">New</button></li>
    <li><button class="sub">Add</button></li>
    <li><button>View Generated HDL<kbd>Ctrl+G</kbd></button></li>
    <li class="rule"></li>
    <li><button>Hide Hierarchy<kbd>Shift+SPACE</kbd></button></li>
    <li><button>Cross-Highlight</button></li>
    <li><button>Update Where Used...</button></li>
    <li><button class="sub">Reports</button></li>
    <li class="rule"></li>
    <li><button>Design Unit Cut</button></li>
    <li><button>Design Unit Copy</button></li>
    <li><button disabled>Paste<kbd>Ctrl+V</kbd></button></li>
    <li><button disabled>Paste Special...</button></li>
    <li class="rule"></li>
    <li><button>Remove From Project</button></li>
    <li><button>Delete Design Unit From Disk...</button></li>
    <li><button>Delete Special...</button></li>
    <li><button>Rename<kbd>F2</kbd></button></li>
    <li class="rule"></li>
    <li><button class="sub">DesignChecker</button></li>
    <li class="rule"></li>
    <li><button class="sub">Convert To Graphics</button></li>
    <li><button class="sub">Visualize Code As</button></li>
    <li class="rule"></li>
    <li><button class="hot">Set Design Root</button></li>
    <li><button>Toggle Top Marker</button></li>
    <li class="rule"></li>
    <li><button class="sub">Change Language To</button></li>
    <li class="rule"></li>
    <li><button>Don't Touch Settings...</button></li>
    <li><button>Properties...</button></li>
  </ul>
</div>

<footer class="taskbar">
  <button class="start" aria-label="Start"><svg viewBox="0 0 38 38"><defs><radialGradient id="orb" cx=".5" cy=".9" r=".9"><stop offset="0" stop-color="#5fd3f5"/><stop offset=".5" stop-color="#1c5f99"/><stop offset="1" stop-color="#5a87ab"/></radialGradient></defs><circle cx="19" cy="19" r="17.500" fill="url(#orb)" stroke="#27415f"/><path d="M10 11c3-2 6-2 8 0l-2 8c-2-2-5-2-8 0z" fill="#e8582a"/><path d="M20 12c3 2 6 2 9 0l-2 8c-3 2-6 2-9 0z" fill="#8cc63e"/><path d="M8 21c3-2 5-2 7 0l-2 7c-2-2-4-2-7 0z" fill="#3f9be0"/><path d="M17 22c3 2 6 2 9 0l-2 7c-3 2-6 2-9 0z" fill="#fcc42e"/></svg></button>
  <button class="quick" aria-label="Calculator"><svg viewBox="0 0 24 32"><rect x="1" y="1" width="22" height="30" rx="1" fill="#e3eef7" stroke="#7fa3c0"/><path d="M3 3h18v2H3z" fill="#f0a040"/><path d="M3 6h18v7H3z" fill="#cfe2f0" stroke="#68a"/><path d="M16 7.500h3v4h-3z" fill="none" stroke="#234"/><path d="M4 16h3v2H4zM9 16h3v2H9zM13 16h3v2h-3zM18 16h3v2h-3zM4 20h3v2H4zM9 20h3v2H9zM13 20h3v2h-3zM18 20h3v2h-3zM4 24h3v2H4zM9 24h3v2H9zM13 24h3v2h-3zM4 28h3v1H4zM9 28h3v1H9zM13 28h3v1h-3z" fill="#5a93ca"/><path d="M18 24h3v5h-3z" fill="#f09030"/></svg></button>
  <div class="task-pair"><button class="task"><svg viewBox="0 0 32 38"><use href="#snip"/></svg>截图工具</button><button class="task"><svg viewBox="0 0 32 38"><use href="#snip"/></svg>截图工具</button></div>
  <button class="task"><svg viewBox="0 0 32 32"><path d="M10 3h20v27H10z" fill="#fff" stroke="#6fa3d8"/><path d="M21 8h7M21 12h7M21 16h7M21 20h7M21 24h7" stroke="#69b"/><path d="M1 4l19-3v30L1 28z" fill="#1d55a5"/><path d="M4 10l3 12 3.500-11L14 22l3-12" fill="none" stroke="#fff" stroke-width="2.300"/></svg>HDL Designer作...</button>
  <button class="quick ie" aria-label="Browser"><svg viewBox="0 0 34 34"><circle cx="17" cy="17" r="15" fill="#2b92d8" stroke="#fff" stroke-width="2"/><path d="M25 22c-3 5-15 5-16-5 0-10 16-11 16 1H10" fill="none" stroke="#fff" stroke-width="3"/></svg></button>
  <div class="task-pair"><button class="task on"><svg viewBox="0 0 28 28"><use href="#hdl"/></svg>Design Manage...</button><button class="task"><svg viewBox="0 0 28 28"><use href="#hdl"/></svg>Log Window</button></div>
  <div class="tray">
    <span class="lang">CH</span>
    <svg viewBox="0 0 16 16"><path d="M1 6h14v8H1z" fill="#ddd" stroke="#555"/><path d="M3 8h10M3 10h10M4 12h8" stroke="#666" stroke-dasharray="1 1"/><path d="M8 6c0-4 5 0 5-4" stroke="#555" fill="none"/></svg>
    <svg viewBox="0 0 16 16"><circle cx="8" cy="8" r="7.500" fill="#0618a8" stroke="#ccd"/><path d="M5.500 6c0-4 5-3 5-.5C10.500 7.500 8 7 8 10M8 11v2" fill="none" stroke="#fff" stroke-width="1.800"/></svg>
    <svg class="bar-tools" viewBox="0 0 10 20"><path d="M3.500 1.500h5v3h-5zM1.500 3.500h5v3h-5z" fill="#8194aa" stroke="#fff"/><path d="M2 14h6l-3 3z" fill="#fff"/></svg>
    <svg viewBox="0 0 16 16"><path d="M4 11l4-4 4 4z" fill="#fff" stroke="#567" stroke-width=".5"/></svg>
    <svg viewBox="0 0 16 16"><path d="M1 5h3l4-4v14l-4-4H1z" fill="#fff" stroke="#556"/><circle cx="11" cy="11" r="4.500" fill="#d22" stroke="#fff"/><path d="M8 8l6 6" stroke="#fff" stroke-width="1.500"/></svg>
    <svg viewBox="0 0 16 16"><path d="M1 1v15M2 2c4-2 5 2 11 0v8c-6 2-7-2-11 0z" fill="#fff" stroke="#334"/><circle cx="11" cy="11" r="4.500" fill="#d22" stroke="#fff"/><path d="M9 9l4 4M13 9l-4 4" stroke="#fff" stroke-width="1.500"/></svg>
    <svg viewBox="0 0 16 16"><path d="M5 2h10v10H5z" fill="#68788a" stroke="#fff"/><path d="M1 1v4h4V1M3 5v9h5" fill="none" stroke="#fff" stroke-width="1.500"/><path d="M11 6l5 9H6z" fill="#fc0" stroke="#650" stroke-width=".6"/><path d="M11 9v3M11 13v1" stroke="#000" stroke-width="1.300"/></svg>
    <time class="clock">15:46<br>2021/5/27</time>
    <button class="show-desktop" aria-label="Show desktop"></button>
  </div>
</footer>
</body>
</html>
```
FILE: styles.css
```css
* { box-sizing: border-box; }
html, body { height: 100%; }
body {
  margin: 0;
  display: flex;
  flex-direction: column;
  overflow: hidden;
  font: 11px/14px "Liberation Sans", Arial, sans-serif;
  color: #000;
  background: #8194aa;
}
button {
  margin: 0; padding: 0; border: 0;
  background: none; color: inherit; font: inherit;
  display: flex; align-items: center; justify-content: center;
  flex: none;
}
h1, h2, h3, ul { margin: 0; padding: 0; }
ul { list-style: none; }
svg { display: block; flex: none; overflow: visible; }
.sprite { position: absolute; width: 0; height: 0; }

/* window frame */
.window {
  position: relative;
  flex: 1; min-height: 0;
  display: flex; flex-direction: column;
  padding-left: 8px;
  border-top: 1px solid #334;
  background: linear-gradient(90deg, #111 1px, #fff 1px 2px, #b9d1ea 2px);
}
.titlebar {
  height: 29px; margin-left: -6px; padding: 6px 0 0 8px;
  display: flex; align-items: center;
  background: linear-gradient(#fff 1px, #9bb4d2 2px, #b9d1ea);
  font: 12px/18px "Noto Sans", sans-serif;
}
.app-icon { width: 16px; height: 16px; margin-right: 4px; }
.title-text { flex: 1; }
.win-buttons { display: flex; gap: 2px; }
.win-btn {
  width: 31px; height: 17px;
  border: 1px solid #5c7086; border-radius: 2px;
  background: linear-gradient(#c6d8ea 50%, #9db6d2 50%, #b5cde6);
  box-shadow: inset 0 0 0 1px #dce8f4;
}
.win-btn svg { width: 12px; height: 12px; }
.win-btn.close {
  width: 25px; border-right: 0; border-radius: 2px 0 0 2px; border-color: #5a1a14;
  background: linear-gradient(#e0a090 50%, #bf4028 50%, #d0705a);
  box-shadow: none; padding-left: 4px;
}
.menubar {
  height: 20px; padding-left: 7px;
  display: flex; align-items: center; gap: 15px;
  font: 12px/18px "Noto Sans", sans-serif;
  background: linear-gradient(#fff, #e9edf6 7px, #d5dbee 7px, #e0e6f5);
}
.toolbar {
  height: 28px; display: flex;
  background: #f0f0f0; border-top: 1px solid #a0a0a0; border-bottom: 1px solid #fff;
}
.tool-group {
  display: flex; align-items: center; height: 26px;
  padding: 0 4px 0 4px;
  border-right: 1px solid #a0a0a0; border-bottom: 1px solid #a0a0a0;
}
.tool-group:first-child { padding-left: 5px; }
.tool-group::before { content: ""; width: 3px; height: 20px; background: linear-gradient(90deg, #fff 1px, #a0a0a0 1px 3px); }
.tool { width: 25px; height: 24px; }
.tool svg { width: 18px; height: 18px; }
.drop { width: 12px; height: 24px; }
.drop::after { content: ""; border: 3px solid transparent; border-top-color: #000; border-bottom: 0; }
.sep { width: 3px; height: 18px; background: linear-gradient(90deg, transparent 1px, #a0a0a0 1px 2px, #fff 2px); }

/* workspace */
.workspace { flex: 1; min-height: 0; display: flex; background: #f0f0f0; }
.sidebar {
  width: 101px; display: flex; flex-direction: column;
  border-left: 1px solid #a0a0a0; border-right: 1px solid #fff;
}
.side-tab { height: 19px; border-right: 1px solid #a0a0a0; border-bottom: 1px solid #a0a0a0; border-top: 1px solid #fff; }
.launchers {
  flex: 1; border-left: 1px solid #000; background: #aaa797;
  display: flex; flex-direction: column; gap: 16px;
  padding: 9px 0 0 17px;
}
.launcher {
  position: relative; width: 62px; height: 62px; flex-direction: column;
  border-radius: 6px;
  background: linear-gradient(135deg, #f2f2f2, #dcdcdc 60%, #c2c2c2);
  box-shadow: 1px 1px 1px #555;
  font: 10px/10px "Liberation Sans", Arial, sans-serif;
}
.launcher > svg:first-child { width: 62px; height: 42px; }
.launcher span { height: 20px; width: 60px; display: flex; align-items: center; justify-content: center; }
.launcher.tall > svg:first-child { height: 46px; }
.launcher.tall span { height: 16px; }
.launcher .badge { position: absolute; left: -2px; top: -1px; width: 8px; height: 12px; }
.launcher.tall .badge { height: 8px; }
.hdl-text { font: bold 8px "DejaVu Sans", sans-serif; fill: #22f; }
.sv-text { font: bold 11px "DejaVu Sans", sans-serif; text-anchor: middle; }

.explorer {
  flex: 1; min-width: 0; margin-left: 2px;
  display: flex; flex-direction: column;
  border-left: 1px solid #a0a0a0;
}
.panel-title {
  height: 20px; padding: 0 4px 0 10px;
  display: flex; align-items: center; gap: 2px;
  color: #fff; background: #39f; border-bottom: 1px solid #a0a0a0;
}
.panel-title h2 { flex: 1; font: bold 12px/18px "Liberation Sans", Arial, sans-serif; }
.mini {
  width: 13px; height: 13px; color: #000; background: #f0f0f0;
  font-weight: bold; border: 1px solid; border-color: #fff #444 #444 #fff;
}
.mini svg { width: 9px; height: 9px; }
.panes { flex: 1; min-height: 0; display: flex; padding-left: 1px; border-bottom: 1px solid #a0a0a0; }
.pane-left, .pane-right { flex: 1; min-width: 0; display: flex; flex-direction: column; }
.pane-right { margin-left: 3px; border-left: 1px solid #a0a0a0; border-right: 1px solid #a0a0a0; }
.pane { flex: 1; min-height: 0; overflow: hidden; }
.shade { background: linear-gradient(90deg, #f7f7f7 200px, #fff 200px); }
.files { border-top: 1px solid #a0a0a0; margin-top: 2px; }
.grid { width: 100%; table-layout: fixed; border-collapse: collapse; }
.w200 { width: 200px; }
.w150 { width: 150px; }
.w140 { width: 140px; }
.w100 { width: 100px; }
.grid th {
  height: 19px; padding: 0 4px; text-align: left; font-weight: normal; line-height: 18px;
  background: #f0f0f0; border-bottom: 1px solid #a0a0a0;
}
.grid th:not(:last-child) { box-shadow: inset -1px 0 #a0a0a0; }
.active th { font: bold 12px/18px "Liberation Sans", Arial, sans-serif; color: #fff; background: #5a87d5; }
.active th:not(:last-child) { box-shadow: inset -1px 0 #fff; }
.grid td { height: 17px; padding: 0 0 0 2px; line-height: 17px; white-space: nowrap; overflow: hidden; }
.grid td:first-child { padding: 0; overflow: visible; }
.files .grid td { height: 19px; line-height: 19px; }
.current td { background: #f0f0ff; }
.current td:first-child { background: linear-gradient(90deg, #f7f7f7 40px, #f0f0ff 40px); }

/* tree cells */
.tree { display: flex; align-items: center; height: 17px; }
.files .tree { height: 19px; }
.l0 { padding-left: 6px; }
.l0 .icon { margin-left: 7px; }
.l1 { padding-left: 26px; }
.l2 { padding-left: 46px; }
.leaf30 { padding-left: 30px; }
.leaf50 { padding-left: 50px; }
.g30, .g50 {
  background: repeating-linear-gradient(#999 0 1px, transparent 1px 2px) 30px 0 / 1px 100% no-repeat;
}
.g50 { background-position-x: 50px; }
.tree.last { background-size: 1px 50%; }
.dots { flex: none; height: 1px; background: repeating-linear-gradient(90deg, #999 0 1px, transparent 1px 2px); }
.d7 { width: 7px; }
.d12 { width: 12px; }
.d17 { width: 17px; }
.toggle {
  width: 9px; height: 9px; border: 1px solid #888;
  background: linear-gradient(#000, #000) center / 5px 1px no-repeat #fff;
}
.toggle.plus { background: linear-gradient(#000, #000) center / 5px 1px no-repeat, linear-gradient(#000, #000) center / 1px 5px no-repeat, #fff; }
.toggle.blue { background: linear-gradient(#00e, #00e) center / 5px 1px no-repeat, linear-gradient(#00e, #00e) center / 1px 5px no-repeat, #fff; }
.icon { width: 16px; height: 16px; }
.icon.narrow { width: 14px; }
.warn { width: 10px; height: 12px; }
.warn.wide { width: 12px; }
.gem { width: 8px; height: 13px; }
.tree span { padding-left: 4px; }
.tree .picked { margin-left: 2px; padding: 0 4px; font-weight: bold; font-size: 12px; color: #fff; background: #39f; }
.red { color: #e00; }
.s { width: 12px; font-size: 11px; text-align: center; }
.tree.section { margin-left: 5px; padding-left: 1px; font-weight: bold; font-size: 12px; border-bottom: 2px solid #aaa; }
.section .icon { margin-left: 7px; }
.tick {
  appearance: none; margin: 0; flex: none;
  width: 9px; height: 9px; border: 1px solid #888; background: #fff;
}
.tick::after { content: ""; display: block; width: 4px; height: 7px; margin: -1px 0 0 2px; border: solid #090; border-width: 0 2px 2px 0; rotate: 40deg; box-sizing: border-box; }

.hscroll { height: 17px; display: flex; background: #f0f0f0; border-top: 1px solid #e3e3e3; }
.hscroll button { width: 17px; }
.hscroll button svg { width: 7px; height: 8px; fill: #333; }
.track { flex: 1; display: flex; }
.thumb {
  width: 82%; border: 1px solid #979797; border-radius: 2px;
  background:
    repeating-linear-gradient(90deg, #555 0 1px, #eee 1px 3px) center / 8px 7px no-repeat,
    linear-gradient(#f4f4f4 50%, #d4d4d8 50%, #ccc);
}
.doc-tabs { height: 19px; padding-left: 3px; display: flex; align-items: flex-start; background: #a0a0a0; border-top: 1px solid #fff; }
.doc-tab { height: 17px; padding: 0 7px; color: #fff; border: 1px solid #000; border-width: 0 1px 1px; border-radius: 0 0 2px 2px; }
.doc-tab.on { color: #555; background: #f0f0f0; border-left: 0; }

/* launch pad */
.launchpad { width: 450px; margin-left: 4px; display: flex; border-left: 1px solid #a0a0a0; }
.pad-main { flex: 1; min-width: 0; display: flex; flex-direction: column; }
.pad-title { height: 20px; padding-left: 10px; line-height: 20px; border-bottom: 1px solid #a0a0a0; }
.pad-tools { height: 25px; padding-left: 8px; display: flex; gap: 7px; }
.pad-tools button { width: 18px; height: 21px; }
.pad-tools svg { width: 18px; height: 18px; }
.pad-body { flex: 1; padding: 25px 11px 0 5px; background: #fff; }
h1 { font-size: 19px; line-height: 24px; }
hr { margin: 2px 0 0 6px; border: 0; height: 2px; background: linear-gradient(#000 1px, #888 1px); }
.pad-body h3 { margin: 17px 0 6px; font-size: 14px; line-height: 16px; }
.pad-body hr + h3 { margin-top: 15px; }
.pad-body li { height: 14px; padding-left: 15px; display: flex; align-items: center; gap: 9px; }
.pad-body li svg { width: 11px; height: 11px; }
a { color: #00e; text-decoration: none; }
hr.end { margin: 14px 0 12px 6px; }
.news { display: block; }
.welcome { display: flex; gap: 4px; padding-left: 4px; }
.welcome svg { width: 52px; height: 40px; }
.banner { width: 152px; height: 42px; padding-top: 5px; color: #fff; background: #0000c0; font-size: 15px; line-height: 16px; text-align: center; white-space: nowrap; }
.banner small { font-size: 10px; line-height: 8px; }
.pad-tabs { width: 12px; display: flex; flex-direction: column; overflow: hidden; background: #a0a0a0; }
.collapse { height: 21px; background: #f0f0f0; justify-content: flex-end; }
.collapse svg { width: 8px; height: 10px; }
.vtab {
  width: 16px; padding: 2px 0 4px; writing-mode: vertical-rl;
  justify-content: flex-start; font-weight: bold;
  border: solid #000; border-width: 2px 0; margin-bottom: 1px;
}
.vtab.on { background: #fff; }
.splitter { flex: 1; display: flex; align-items: center; padding-bottom: 0; }
.splitter svg { width: 8px; height: 10px; margin-left: 4px; }

.statusbar {
  height: 16px; padding: 6px 0 0 1px; overflow: hidden;
  font: 10px/12px "Liberation Mono", "Courier New", monospace;
  background: #f0f0f0; border-top: 1px solid #a0a0a0;
}

/* context menu floats over the panes */
.context {
  position: absolute; left: 230px; top: 277px; width: 341px; padding: 2px;
  border: 1px solid #979797;
  background: linear-gradient(90deg, transparent 28px, #e2e3e3 28px 29px, #fff 29px 30px, transparent 30px) #f0f0f0;
  box-shadow: 3px 3px 3px rgba(0, 0, 0, .5);
  font: 12px/20px "Noto Sans", sans-serif;
}
.context button { width: 100%; height: 22px; padding: 0 17px 0 31px; justify-content: flex-start; border: 1px solid transparent; border-radius: 3px; }
.context kbd { margin-left: auto; font: inherit; }
.context .sub { padding-right: 8px; }
.context .sub::after { content: ""; margin-left: auto; border: 4px solid transparent; border-left-color: #111; border-right: 0; }
.context button:disabled { color: #777; }
.context .hot { border-color: #aecff7; background: linear-gradient(rgba(230, 240, 252, .4), #e4ecf7); }
.rule { height: 8px; margin-left: 28px; background: linear-gradient(transparent 3px, #e0e0e0 3px 4px, #fff 4px 5px, transparent 5px); }

/* taskbar */
.taskbar {
  height: 40px; flex: none; padding-left: 8px;
  display: flex; align-items: stretch;
  border-top: 1px solid #334; background: linear-gradient(#9aabbf 1px, #8194aa 1px);
  font: 12px/16px "Noto Sans", "Noto Sans CJK SC", sans-serif; color: #fff;
}
.start { width: 38px; }
.start svg { width: 38px; height: 38px; }
.quick { width: 84px; }
.quick svg { width: 24px; height: 32px; }
.quick + .task-pair { margin-left: -8px; }
.ie { width: 65px; }
.ie svg { width: 34px; height: 34px; }
.ie + .task-pair { margin-left: 0; }
.task-pair { display: flex; }
.task {
  width: 159px; padding-left: 8px; justify-content: flex-start; gap: 7px;
  border: 1px solid #3d4c5e; border-radius: 2px;
  background: linear-gradient(170deg, #bcc7d4 0, #98a8ba 45%, #8b9cb0 46%, #8fa1b5);
  box-shadow: inset 0 0 0 1px #aebccb;
}
.task-pair + .task { margin-left: 3px; }
.task svg { width: 30px; height: 34px; }
.task.on { background: linear-gradient(170deg, #dde3ea 0, #b6c2cf 45%, #a9b7c6 46%, #bcc8d4); }
.tray { margin-left: auto; display: flex; align-items: center; gap: 8px; }
.tray svg { width: 16px; height: 18px; }
.tray .bar-tools { width: 10px; }
.lang { font: 12px/16px "Liberation Mono", monospace; }
.clock { width: 72px; line-height: 18px; text-align: center; }
.show-desktop { width: 14px; height: 38px; margin-left: -4px; border: 1px solid #3d4c5e; background: linear-gradient(135deg, #8fa1b5, #566a80); }
```
